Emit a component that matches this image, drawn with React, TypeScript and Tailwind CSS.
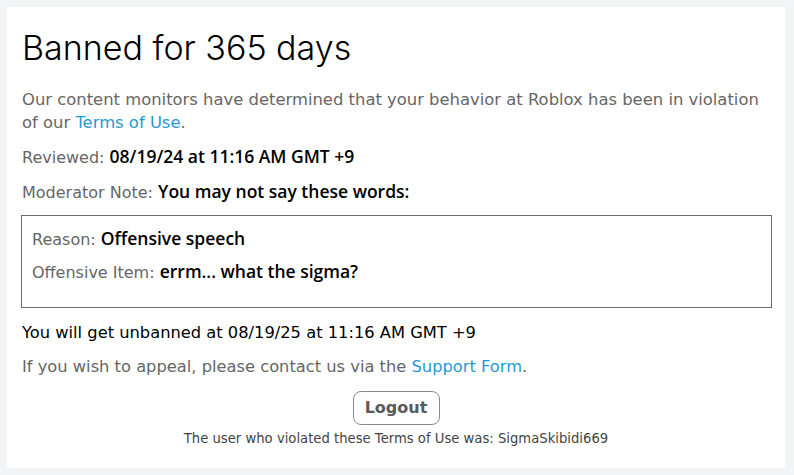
import React from "react";

const label = "text-[#666666] font-['DejaVu_Sans',sans-serif] text-[16px]";
const value = "text-black font-semibold font-['Open_Sans',sans-serif] text-[17.5px]";
const row = "flex items-baseline h-[23px] leading-[23px] whitespace-pre";

export default function App() {
  return (
    <div className="w-[794px] h-[475px] bg-[#f2f4f5] pt-[7px] pl-[7px]">
      <div className="w-[778px] h-[461px] bg-white px-[15px] pt-[21px] flex flex-col">
        <h1 className="text-[34px] leading-[40px] text-black font-light font-['Inter',sans-serif]">
          Banned for 365 days
        </h1>
        <p className="mt-[20px] max-w-[740px] text-[16.4px] leading-[23px] text-[#666666] font-['DejaVu_Sans',sans-serif]">
          Our content monitors have determined that your behavior at Roblox has been in violation of our{" "}
          <span className="text-[#1f9ad6]">Terms of Use</span>.
        </p>
        <div className={`mt-[11px] ${row}`}>
          <span className={label}>Reviewed: </span>
          <span className={value}>08/19/24 at 11:16 AM GMT +9</span>
        </div>
        <div className={`mt-[12px] ${row}`}>
          <span className={label}>Moderator Note: </span>
          <span className={value}>You may not say these words:</span>
        </div>
        <div className="mt-[12px] -ml-px w-[751px] h-[93px] border border-[#6e6e6e] pt-[11px] px-[10px] flex flex-col gap-[10px]">
          <div className={row}>
            <span className={label}>Reason: </span>
            <span className={value}>Offensive speech</span>
          </div>
          <div className={row}>
            <span className={label}>Offensive Item: </span>
            <span className={value}>errm... what the sigma?</span>
          </div>
        </div>
        <p className="mt-[13px] text-[16.3px] leading-[23px] text-black font-['DejaVu_Sans',sans-serif]">
          You will get unbanned at 08/19/25 at 11:16 AM GMT +9
        </p>
        <p className="mt-[11px] text-[16.3px] leading-[23px] text-[#666666] font-['DejaVu_Sans',sans-serif]">
          If you wish to appeal, please contact us via the{" "}
          <span className="text-[#1f9ad6]">Support Form</span>.
        </p>
        <div className="mt-[13px] flex justify-center">
          <button className="w-[87px] h-[34px] rounded-[8px] border border-[#8a8a8a] text-[16px] font-bold text-[#5a5a5a] font-['DejaVu_Sans',sans-serif] flex items-center justify-center">
            Logout
          </button>
        </div>
        <p className="mt-[5px] text-[13.2px] leading-[18px] text-[#444444] text-center font-['DejaVu_Sans',sans-serif]">
          The user who violated these Terms of Use was: SigmaSkibidi669
        </p>
      </div>
    </div>
  );
}
